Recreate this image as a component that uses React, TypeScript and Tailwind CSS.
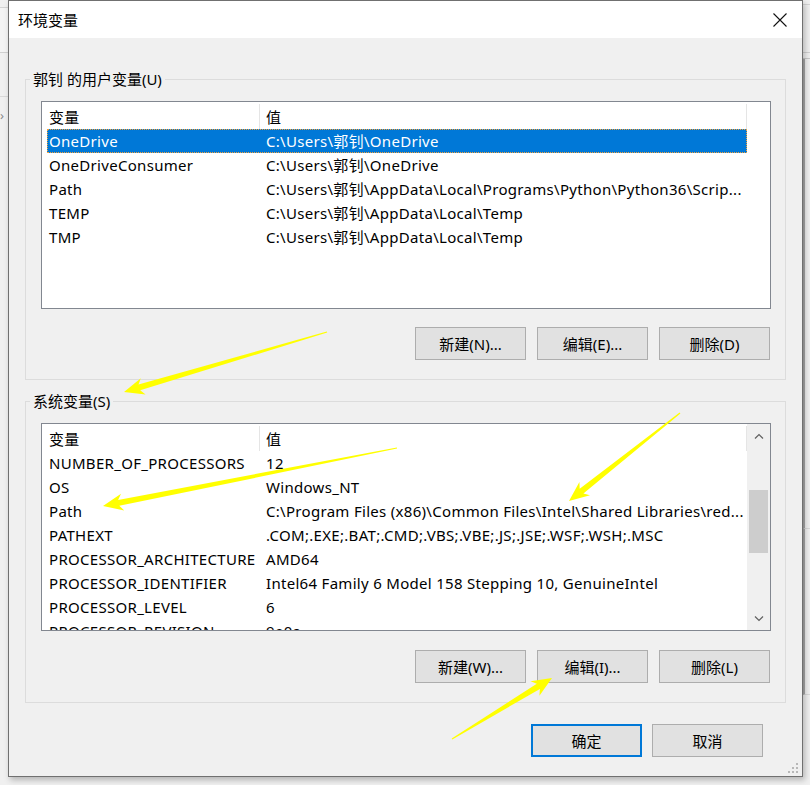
import React from "react";

type Row = [string, string];

const userVars: Row[] = [
  ["OneDrive", "C:\\Users\\郭钊\\OneDrive"],
  ["OneDriveConsumer", "C:\\Users\\郭钊\\OneDrive"],
  ["Path", "C:\\Users\\郭钊\\AppData\\Local\\Programs\\Python\\Python36\\Scrip..."],
  ["TEMP", "C:\\Users\\郭钊\\AppData\\Local\\Temp"],
  ["TMP", "C:\\Users\\郭钊\\AppData\\Local\\Temp"],
];

const sysVars: Row[] = [
  ["NUMBER_OF_PROCESSORS", "12"],
  ["OS", "Windows_NT"],
  ["Path", "C:\\Program Files (x86)\\Common Files\\Intel\\Shared Libraries\\red..."],
  ["PATHEXT", ".COM;.EXE;.BAT;.CMD;.VBS;.VBE;.JS;.JSE;.WSF;.WSH;.MSC"],
  ["PROCESSOR_ARCHITECTURE", "AMD64"],
  ["PROCESSOR_IDENTIFIER", "Intel64 Family 6 Model 158 Stepping 10, GenuineIntel"],
  ["PROCESSOR_LEVEL", "6"],
  ["PROCESSOR_REVISION", "9e0a"],
];

// tapered yellow arrow: thin tail, wide swept head
function arrowPoints(tx: number, ty: number, hx: number, hy: number, shaftW: number, headW: number, headL: number) {
  const len = Math.hypot(hx - tx, hy - ty);
  const ux = (hx - tx) / len;
  const uy = (hy - ty) / len;
  const nx = -uy;
  const ny = ux;
  const bx = hx - ux * headL;
  const by = hy - uy * headL;
  const nb = bx + ux * 4;
  const nby = by + uy * 4;
  const pts = [
    [tx + nx * 0.6, ty + ny * 0.6],
    [nb + nx * shaftW / 2, nby + ny * shaftW / 2],
    [bx + nx * headW / 2, by + ny * headW / 2],
    [hx, hy],
    [bx - nx * headW / 2, by - ny * headW / 2],
    [nb - nx * shaftW / 2, nby - ny * shaftW / 2],
    [tx - nx * 0.6, ty - ny * 0.6],
  ];
  return pts.map((p) => p.map((v) => v.toFixed(1)).join(",")).join(" ");
}

const arrows = [
  [327, 332, 124, 392, 6, 17, 20],
  [397, 448, 103, 506, 6, 17, 20],
  [680, 413, 569, 501, 6, 17, 20],
  [452, 739, 552, 678, 6, 17, 20],
];

function Btn({ label, primary }: { label: string; primary?: boolean }) {
  return (
    <div
      className={`w-[111px] h-[33px] flex items-center justify-center bg-[#e1e1e1] text-[15px] text-black ${
        primary ? "border-2 border-[#0078d7]" : "border border-[#adadad]"
      }`}
    >
      {label}
    </div>
  );
}

function VarList({ rows, selected, scroll }: { rows: Row[]; selected?: number; scroll?: boolean }) {
  return (
    <div className="w-[730px] h-[208px] border border-[#828790] bg-white flex overflow-hidden tracking-[0.3px]">
      <div className="w-[705px] flex flex-col shrink-0">
        <div className="h-[27px] flex shrink-0 pt-[2px]">
          <div className="w-[218px] border-r border-[#e5e5e5] pl-[7px] flex items-center">变量</div>
          <div className="w-[487px] border-r border-[#e5e5e5] pl-[6px] flex items-center">值</div>
        </div>
        {rows.map(([name, value], i) => (
          <div
            key={name}
            className={`ml-[5px] w-[700px] h-[24px] shrink-0 flex items-center whitespace-nowrap ${
              i === selected ? "bg-[#0078d7] text-white outline-1 outline-dotted outline-[#f4a23a] -outline-offset-1" : ""
            }`}
          >
            <div className="w-[212px] pl-[2px] overflow-hidden">{name}</div>
            <div className="w-[488px] pl-[7px] overflow-hidden">{value}</div>
          </div>
        ))}
      </div>
      {scroll && (
        <div className="w-[23px] bg-[#f0f0f0] flex flex-col items-center">
          <div className="h-[23px] w-full flex items-center justify-center">
            <svg width="10" height="6" viewBox="0 0 10 6">
              <path d="M1 5.5 L5 1.5 L9 5.5" fill="none" stroke="#606060" strokeWidth="1.2" />
            </svg>
          </div>
          <div className="mt-[43px] w-[19px] h-[63px] bg-[#cdcdcd]" />
          <div className="flex-1" />
          <div className="h-[23px] w-full flex items-center justify-center">
            <svg width="10" height="6" viewBox="0 0 10 6">
              <path d="M1 0.5 L5 4.5 L9 0.5" fill="none" stroke="#606060" strokeWidth="1.2" />
            </svg>
          </div>
        </div>
      )}
    </div>
  );
}

function Group({ title, children }: { title: string; children: React.ReactNode }) {
  return (
    <fieldset className="ml-[16px] w-[761px] border border-[#dcdcdc] pb-[19px]">
      <legend className="ml-[4px] px-[3px] text-[15px] leading-[20px]">{title}</legend>
      <div className="pl-[15px] pr-[14px]">{children}</div>
    </fieldset>
  );
}

export default function App() {
  return (
    <div className="relative w-[810px] h-[785px] overflow-hidden bg-[#f0f0f0] text-[15px] leading-[20px] text-black font-['Noto_Sans','Noto_Sans_CJK_SC',sans-serif]">
      <div className="flex">
        {/* window behind, left edge */}
        <div className="w-[8px] flex flex-col shrink-0">
          <div className="h-[8px] border-b border-[#d4d4d4]" />
          <div className="h-[45px] bg-[#f4f4f4] border-b border-[#d0d0d0]" />
          <div className="h-[44px] border-b border-[#d9d9d9]" />
          <div className="h-[36px] flex items-center text-[#8a8a8a] text-[13px] leading-none">›</div>
        </div>

        {/* dialog */}
        <div className="relative w-[795px] h-[777px] shrink-0 border border-[#707070] flex flex-col shadow-[2px_3px_6px_rgba(0,0,0,0.25)]">
          <div className="h-[37px] bg-white flex items-center justify-between pl-[9px] pr-[15px] shrink-0">
            <span className="text-[15px]">环境变量</span>
            <svg width="14" height="14" viewBox="0 0 14 14">
              <path d="M0.5 0.5 L13.5 13.5 M13.5 0.5 L0.5 13.5" stroke="#111" strokeWidth="1.1" />
            </svg>
          </div>
          <div className="flex-1 bg-[#f0f0f0] flex flex-col pt-[31px]">
            <Group title="郭钊 的用户变量(U)">
              <div className="mt-[12px]">
                <VarList rows={userVars} selected={0} />
              </div>
              <div className="mt-[18px] flex justify-end gap-[11px] mr-[1px]">
                <Btn label="新建(N)..." />
                <Btn label="编辑(E)..." />
                <Btn label="删除(D)" />
              </div>
            </Group>
            <div className="h-[11px]" />
            <Group title="系统变量(S)">
              <div className="mt-[12px]">
                <VarList rows={sysVars} scroll />
              </div>
              <div className="mt-[19px] flex justify-end gap-[11px] mr-[1px]">
                <Btn label="新建(W)..." />
                <Btn label="编辑(I)..." />
                <Btn label="删除(L)" />
              </div>
            </Group>
            <div className="mt-[21px] flex justify-end gap-[10px] pr-[39px]">
              <Btn label="确定" primary />
              <Btn label="取消" />
            </div>
          </div>
          <svg className="absolute right-[3px] bottom-[2px]" width="12" height="12" viewBox="0 0 12 12">
            <rect x="9" y="1" width="2" height="2" fill="#b8b8b8" />
            <rect x="5" y="5" width="2" height="2" fill="#b8b8b8" />
            <rect x="9" y="5" width="2" height="2" fill="#b8b8b8" />
            <rect x="1" y="9" width="2" height="2" fill="#b8b8b8" />
            <rect x="5" y="9" width="2" height="2" fill="#b8b8b8" />
            <rect x="9" y="9" width="2" height="2" fill="#b8b8b8" />
          </svg>
        </div>

        {/* window behind, right edge */}
        <div className="w-[7px] flex flex-col shrink-0">
          <div className="h-[5px] border-b border-[#d4d4d4]" />
          <div className="h-[48px] border-b border-[#d0d0d0]" />
          <div className="h-[6px] border-b border-[#c8c8c8]" />
          <div className="h-[470px] border-l-2 border-[#a8a8a8] border-b border-b-[#d9d9d9]" />
          <div className="h-[166px] border-l-2 border-[#a8a8a8] border-b border-b-[#d9d9d9]" />
        </div>
      </div>

      {/* annotation arrows */}
      <svg className="absolute inset-0 pointer-events-none" width="810" height="785">
        {arrows.map((a, i) => (
          <polygon key={i} points={arrowPoints(a[0], a[1], a[2], a[3], a[4], a[5], a[6])} fill="#ffff00" />
        ))}
      </svg>
    </div>
  );
}
